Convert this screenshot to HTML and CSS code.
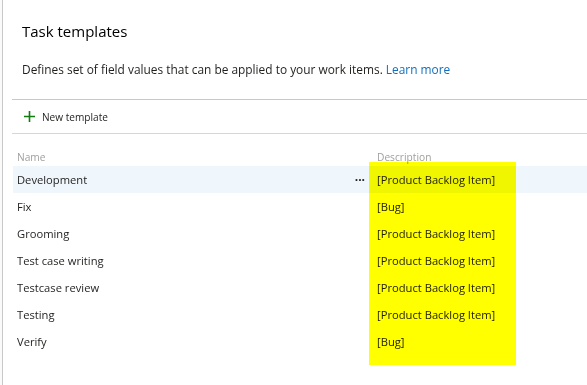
FILE: index.html
```html
<!DOCTYPE html>
<html>
<head>
<meta charset="utf-8">
<link rel="stylesheet" href="styles.css">
</head>
<body>
<div class="frame">
  <div class="edge"></div>
  <div class="panel">
    <h1 class="title">Task templates</h1>
    <p class="desc">Defines set of field values that can be applied to your work items. <a class="link" href="#">Learn more</a></p>
    <div class="toolbar">
      <span class="plus"><svg width="11" height="11" viewBox="0 0 11 11"><path d="M5.5 0V11M0 5.5H11" stroke="#107c10" stroke-width="1.6"/></svg></span>
      <span class="tb-label">New template</span>
    </div>
    <div class="table">
      <div class="row head">
        <div class="c-name">Name</div>
        <div class="c-desc">Description</div>
      </div>
      <div class="row sel">
        <div class="c-name">Development<span class="more">&middot;&middot;&middot;</span></div>
        <div class="c-desc">[Product Backlog Item]</div>
      </div>
      <div class="row">
        <div class="c-name">Fix</div>
        <div class="c-desc">[Bug]</div>
      </div>
      <div class="row">
        <div class="c-name">Grooming</div>
        <div class="c-desc">[Product Backlog Item]</div>
      </div>
      <div class="row">
        <div class="c-name">Test case writing</div>
        <div class="c-desc">[Product Backlog Item]</div>
      </div>
      <div class="row">
        <div class="c-name">Testcase review</div>
        <div class="c-desc">[Product Backlog Item]</div>
      </div>
      <div class="row">
        <div class="c-name">Testing</div>
        <div class="c-desc">[Product Backlog Item]</div>
      </div>
      <div class="row">
        <div class="c-name">Verify</div>
        <div class="c-desc">[Bug]</div>
      </div>
    </div>
  </div>
  <div class="marker"></div>
</div>
</body>
</html>
```
FILE: styles.css
```css
html, body {
  margin: 0;
  padding: 0;
  background: #fff;
}
body {
  font-family: "Open Sans", "Noto Sans", sans-serif;
  color: #201f1e;
  width: 587px;
  height: 385px;
  overflow: hidden;
}
.frame {
  position: relative;
  display: flex;
  height: 385px;
}
.edge {
  width: 2px;
  flex: none;
  border-right: 1px solid #c8c8c8;
  background: #fafafa;
}
.panel {
  flex: 1;
  min-width: 0;
}
.title {
  margin: 0;
  padding: 20px 0 0 19px;
  font-size: 15px;
  font-weight: 400;
  line-height: 22px;
  color: #000;
}
.desc {
  margin: 0;
  padding: 17px 0 0 19px;
  font-size: 11.9px;
  line-height: 20px;
  color: #201f1e;
}
.link {
  color: #106ebe;
  text-decoration: none;
}
.toolbar {
  margin: 20px 0 0 9px;
  height: 33px;
  border-top: 1px solid #c8c8c8;
  border-bottom: 1px solid #d6d6d6;
  display: flex;
  align-items: center;
  padding-left: 12px;
  gap: 7px;
  font-size: 10.1px;
}
.plus {
  display: flex;
}
.table {
  margin: 15px 0 0 10px;
  font-size: 11.2px;
}
.row {
  display: flex;
  height: 27px;
  align-items: center;
}
.row.head {
  height: 17px;
  color: #a19f9d;
  font-size: 10.2px;
  align-items: flex-start;
  line-height: 16px;
}
.row.sel {
  background: #eff6fc;
}
.c-name {
  width: 356px;
  padding-left: 4px;
  display: flex;
  align-items: center;
}
.more {
  margin-left: auto;
  margin-right: 8px;
  font-weight: 700;
  font-size: 12px;
  color: #201f1e;
}
.c-desc {
  padding-left: 4px;
}
.marker {
  position: absolute;
  left: 369px;
  top: 162px;
  width: 147px;
  height: 203px;
  background: #ffff00;
  mix-blend-mode: multiply;
}
```
